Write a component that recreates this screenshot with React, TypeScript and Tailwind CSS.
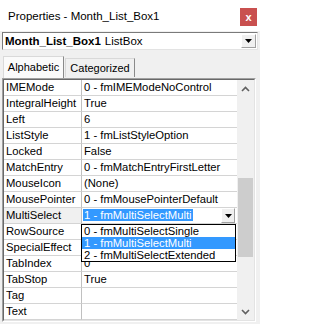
import React from "react";

const rows: [string, string][] = [
  ["IMEMode", "0 - fmIMEModeNoControl"],
  ["IntegralHeight", "True"],
  ["Left", "6"],
  ["ListStyle", "1 - fmListStyleOption"],
  ["Locked", "False"],
  ["MatchEntry", "0 - fmMatchEntryFirstLetter"],
  ["MouseIcon", "(None)"],
  ["MousePointer", "0 - fmMousePointerDefault"],
  ["MultiSelect", "1 - fmMultiSelectMulti"],
  ["RowSource", ""],
  ["SpecialEffect", ""],
  ["TabIndex", "0"],
  ["TabStop", "True"],
  ["Tag", ""],
  ["Text", ""],
];

const options = [
  "0 - fmMultiSelectSingle",
  "1 - fmMultiSelectMulti",
  "2 - fmMultiSelectExtended",
];

const DownTriangle = () => (
  <svg width="7" height="4" viewBox="0 0 7 4">
    <path d="M0 0h7L3.5 4z" fill="#000" />
  </svg>
);

const Chevron = ({ up }: { up?: boolean }) => (
  <svg width="9" height="6" viewBox="0 0 9 6">
    <path
      d={up ? "M1 5L4.5 1.5L8 5" : "M1 1L4.5 4.5L8 1"}
      fill="none"
      stroke="#606060"
      strokeWidth="1.6"
    />
  </svg>
);

const PropertyRow = ({ name, value }: { name: string; value: string }) => {
  const active = name === "MultiSelect";
  return (
    <div className="flex h-[16px]">
      <div
        className={`w-[78px] border-r border-b border-r-[#c0c0c0] border-b-[#d4d4d4] pl-[2px] leading-[15px] whitespace-nowrap overflow-hidden ${
          active ? "bg-[#f0f0f0]" : "bg-white"
        }`}
      >
        {name}
      </div>
      {active ? (
        <div className="w-[155px] border-b border-[#d4d4d4] flex items-start pl-[1px] pr-[2px]">
          <span className="bg-[#3399ff] text-white px-[1px] mt-[1px] leading-[12px] h-[12px]">
            {value}
          </span>
          <div className="ml-auto w-[14px] h-[15px] bg-[#f0f0f0] border border-t-white border-l-white border-r-[#a0a0a0] border-b-[#a0a0a0] flex items-center justify-center">
            <DownTriangle />
          </div>
        </div>
      ) : (
        <div className="w-[155px] border-b border-[#d4d4d4] pl-[2px] leading-[15px] whitespace-nowrap overflow-hidden">
          {value}
        </div>
      )}
    </div>
  );
};

export default function App() {
  return (
    <div
      className="relative w-[260px] h-[324px] bg-[#f0f0f0] overflow-hidden text-black"
      style={{ fontFamily: '"Liberation Sans", Arial, sans-serif' }}
    >
      {/* title bar */}
      <div className="h-[31px] bg-white flex items-start justify-between">
        <span className="pl-[8px] pt-[8px] text-[11.5px] leading-[16px]">
          Properties - Month_List_Box1
        </span>
        <div className="mt-[8px] mr-[3px] w-[17px] h-[18px] bg-[#c9504f] text-white text-[11px] font-bold leading-[16px] flex items-center justify-center">
          x
        </div>
      </div>

      {/* object combo */}
      <div className="mx-[2px] mt-[1px] h-[18px] bg-white border border-t-[#7a7a7a] border-l-[#7a7a7a] border-r-[#e3e3e3] border-b-[#e3e3e3] flex items-center pl-[2px] pr-[1px]">
        <span className="text-[11.5px] font-bold leading-[14px]">Month_List_Box1</span>
        <span className="text-[11.5px] leading-[14px] ml-[4px]">ListBox</span>
        <div className="ml-auto w-[15px] h-[14px] bg-[#f0f0f0] border border-t-white border-l-white border-r-[#a0a0a0] border-b-[#a0a0a0] flex items-center justify-center">
          <DownTriangle />
        </div>
      </div>

      {/* tabs */}
      <div className="h-[28px] flex items-end pl-[3px] text-[11px]">
        <div className="h-[22px] w-[61px] bg-[#fafafa] border-t border-l border-r border-t-[#d9d9d9] border-l-[#d9d9d9] border-r-[#8a8a8a] flex items-center justify-center">
          Alphabetic
        </div>
        <div className="h-[19px] w-[70px] ml-[1px] mb-[1px] bg-[#f0f0f0] border-t border-l border-r border-t-[#d9d9d9] border-l-[#d9d9d9] border-r-[#8a8a8a] flex items-center justify-center">
          Categorized
        </div>
      </div>

      {/* property grid */}
      <div className="mx-[2px] w-[254px] border border-t-[#a0a0a0] border-l-[#a0a0a0] border-r-white border-b-white">
        <div className="border border-t-[#696969] border-l-[#696969] border-r-[#e3e3e3] border-b-[#e3e3e3] flex text-[11.25px]">
          <div className="w-[233px] bg-white">
            {rows.map(([n, v]) => (
              <PropertyRow key={n} name={n} value={v} />
            ))}
          </div>
          <div className="w-[17px] bg-[#f0f0f0] flex flex-col">
            <div className="h-[17px] flex items-center justify-center">
              <Chevron up />
            </div>
            <div className="h-[81px]" />
            <div className="mx-[1px] h-[79px] bg-[#cdcdcd]" />
            <div className="flex-1" />
            <div className="h-[17px] flex items-center justify-center">
              <Chevron />
            </div>
          </div>
        </div>
      </div>

      {/* open dropdown list */}
      <div className="absolute left-[81px] top-[224px] w-[155px] h-[38px] border border-black bg-white text-[11.25px]">
        {options.map((o, i) => (
          <div
            key={o}
            className={`h-[12px] leading-[12px] pl-[2px] whitespace-nowrap overflow-hidden ${
              i === 1 ? "bg-[#3399ff] text-white" : ""
            }`}
          >
            {o}
          </div>
        ))}
      </div>
    </div>
  );
}
